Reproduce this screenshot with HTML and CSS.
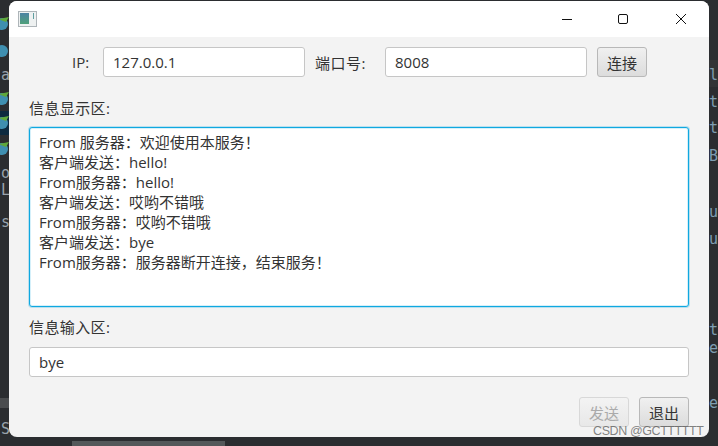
FILE: index.html
```html
<!DOCTYPE html>
<html lang="zh-CN">
<head>
  <meta charset="UTF-8">
  <title>客户端</title>
  <link rel="stylesheet" href="styles.css">
</head>
<body>
  <!-- editor behind the window, only its edges show -->
  <div class="behind">
    <div class="tree-selected"></div>
    <div class="tree-band"></div>
    <div class="code-band"></div>
    <svg class="file-icon i1" viewBox="0 0 9 16"><circle cx="2" cy="9" r="6" fill="#3f8fb0"/><path d="M-2 4 L9 2 L6 7 Z" fill="#5fa83c"/></svg>
    <svg class="file-icon i2" viewBox="0 0 9 16"><circle cx="2" cy="9" r="6" fill="#3f8fb0"/></svg>
    <svg class="file-icon i3" viewBox="0 0 9 16"><circle cx="2" cy="9" r="6" fill="#3f8fb0"/><path d="M-2 4 L9 2 L6 7 Z" fill="#5fa83c"/></svg>
    <svg class="file-icon i4" viewBox="0 0 9 16"><circle cx="2" cy="9" r="6" fill="#3f8fb0"/><path d="M-2 4 L9 2 L6 7 Z" fill="#5fa83c"/></svg>
    <svg class="file-icon i5" viewBox="0 0 9 16"><circle cx="2" cy="9" r="6" fill="#3f8fb0"/><path d="M-2 4 L9 2 L6 7 Z" fill="#5fa83c"/></svg>
    <span class="edge l" style="top:66px">a</span>
    <span class="edge l" style="top:164px">or</span>
    <span class="edge l" style="top:181px">Li</span>
    <span class="edge l" style="top:213px">s</span>
    <span class="edge l" style="top:420px">S</span>
    <span class="edge r" style="top:66px">l</span>
    <span class="edge r" style="top:93px">t</span>
    <span class="edge r" style="top:119px">t</span>
    <span class="edge r" style="top:147px">B</span>
    <span class="edge r" style="top:203px">u</span>
    <span class="edge r" style="top:230px">u</span>
    <span class="edge r" style="top:321px">t</span>
    <span class="edge r" style="top:339px">e</span>
    <span class="edge r" style="top:394px">e</span>
    <div class="h-scroll"></div>
  </div>

  <div class="window">
    <div class="titlebar">
      <svg class="app-icon" width="19" height="16" viewBox="0 0 19 16">
        <defs>
          <linearGradient id="icon-fill" x1="0" y1="0" x2="0" y2="1">
            <stop offset="0" stop-color="#4d84a4"/>
            <stop offset="1" stop-color="#4fa07a"/>
          </linearGradient>
        </defs>
        <rect x="0.5" y="0.5" width="18" height="15" fill="#eef1f1" stroke="#aeb5b9"/>
        <rect x="2" y="2" width="9" height="11" fill="url(#icon-fill)"/>
        <rect x="15" y="2" width="1" height="6" fill="#5f9fa0"/>
      </svg>
      <div class="win-buttons">
        <svg class="win-min" width="46" height="36" viewBox="0 0 46 36"><path d="M18 18.5 H28" stroke="#111" stroke-width="1"/></svg>
        <svg width="46" height="36" viewBox="0 0 46 36"><rect x="18.5" y="13.5" width="9" height="9" rx="1.5" fill="none" stroke="#111" stroke-width="1"/></svg>
        <svg width="46" height="36" viewBox="0 0 46 36"><path d="M18 13 L28 23 M28 13 L18 23" stroke="#111" stroke-width="1"/></svg>
      </div>
    </div>

    <div class="content">
      <div class="connect-row">
        <label class="ip-label">IP:</label>
        <div class="field ip-field">127.0.0.1</div>
        <label class="port-label">端口号:</label>
        <div class="field port-field">8008</div>
        <button class="btn">连接</button>
      </div>

      <div class="section-label first">信息显示区:</div>
      <div class="display">
        <div>From 服务器：欢迎使用本服务！</div>
        <div>客户端发送：hello!</div>
        <div>From服务器：hello!</div>
        <div>客户端发送：哎哟不错哦</div>
        <div>From服务器：哎哟不错哦</div>
        <div>客户端发送：bye</div>
        <div>From服务器：服务器断开连接，结束服务！</div>
      </div>

      <div class="section-label second">信息输入区:</div>
      <div class="field input-field">bye</div>

      <div class="actions">
        <button class="btn disabled">发送</button>
        <button class="btn">退出</button>
      </div>
    </div>
  </div>

  <div class="watermark">CSDN @GCTTTTTT</div>
</body>
</html>
```

FILE: styles.css
```css
html, body {
  margin: 0;
  padding: 0;
  width: 718px;
  height: 446px;
  overflow: hidden;
}
body {
  background-color: #2b2d30;
  font-family: "Open Sans", "Noto Sans CJK SC", sans-serif;
  font-size: 15px;
  color: #333;
  box-sizing: border-box;
  padding: 1px 9px 9px 9px;
}
.behind {
  position: absolute;
  inset: 0;
}
.tree-selected {
  position: absolute;
  left: 0;
  top: 111px;
  width: 9px;
  height: 24px;
  background-color: #0d2a3f;
}
.tree-band {
  position: absolute;
  left: 0;
  top: 398px;
  width: 9px;
  height: 10px;
  background-color: #4a4c4e;
}
.code-band {
  position: absolute;
  left: 709px;
  top: 60px;
  width: 9px;
  height: 27px;
  background-color: #323436;
}
.file-icon {
  position: absolute;
  left: 0;
  width: 9px;
  height: 16px;
}
.i1 { top: 15px; }
.i2 { top: 42px; }
.i3 { top: 90px; }
.i4 { top: 114px; }
.i5 { top: 140px; }
.edge {
  position: absolute;
  font-family: "DejaVu Sans Mono", monospace;
  font-size: 15px;
  line-height: 18px;
  color: #9aa4ac;
}
.edge.l { left: 1px; }
.edge.r { left: 709px; color: #7f9db0; }
.h-scroll {
  position: absolute;
  left: 72px;
  top: 441px;
  width: 153px;
  height: 5px;
  background-color: #54585a;
}

.window {
  position: relative;
  width: 700px;
  height: 436px;
  border-radius: 8px;
  overflow: hidden;
  background-color: #f3f3f3;
}
.titlebar {
  height: 36px;
  background-color: #fff;
  display: flex;
  align-items: center;
  justify-content: space-between;
  padding-left: 9px;
}
.app-icon {
  margin-top: -1px;
}
.win-buttons {
  display: flex;
  gap: 12px;
  margin-right: 5px;
}
.win-buttons svg {
  display: block;
}
.win-min {
  margin-right: -2px;
}
.content {
  padding: 10px 20px 0 20px;
}
.connect-row {
  display: flex;
  align-items: center;
  height: 30px;
}
.ip-label {
  width: 74px;
  padding-left: 43px;
  box-sizing: border-box;
}
.ip-field, .port-field {
  width: 202px;
}
.port-label {
  width: 80px;
  padding-left: 10px;
  box-sizing: border-box;
  letter-spacing: 0.5px;
}
.field {
  height: 30px;
  box-sizing: border-box;
  background-color: #fff;
  border: 1px solid #c6c6c6;
  border-radius: 3px;
  padding: 0 9px;
  line-height: 28px;
}
.btn {
  width: 50px;
  height: 30px;
  padding: 0;
  font-family: inherit;
  font-size: 15px;
  color: #333;
  border: 1px solid #b8b8b8;
  border-radius: 3px;
  background: linear-gradient(#f0f0f0, #dcdcdc);
}
.connect-row .btn {
  margin-left: 10px;
}
.section-label {
  line-height: 20px;
  letter-spacing: 0.4px;
}
.section-label.first {
  margin-top: 21px;
}
.section-label.second {
  margin-top: 10px;
}
.display {
  margin-top: 9px;
  height: 180px;
  box-sizing: border-box;
  background-color: #fff;
  border: 1px solid #0fa8e0;
  border-radius: 3px;
  box-shadow: inset 0 0 0 1px #d5f0fa, 0 0 0 1px rgba(15, 168, 224, 0.25);
  padding: 4px 9px;
  line-height: 20px;
  white-space: nowrap;
}
.input-field {
  margin-top: 10px;
}
.actions {
  display: flex;
  justify-content: flex-end;
  gap: 10px;
  margin-top: 20px;
}
.btn.disabled {
  color: #aaa;
  border-color: #d8d8d8;
  background: linear-gradient(#f3f3f3, #e8e8e8);
}
.watermark {
  position: absolute;
  left: 593px;
  top: 424px;
  font-family: "Liberation Sans", sans-serif;
  font-size: 12.5px;
  letter-spacing: -0.4px;
  line-height: 14px;
  color: rgba(90, 90, 90, 0.75);
  white-space: nowrap;
}
```
